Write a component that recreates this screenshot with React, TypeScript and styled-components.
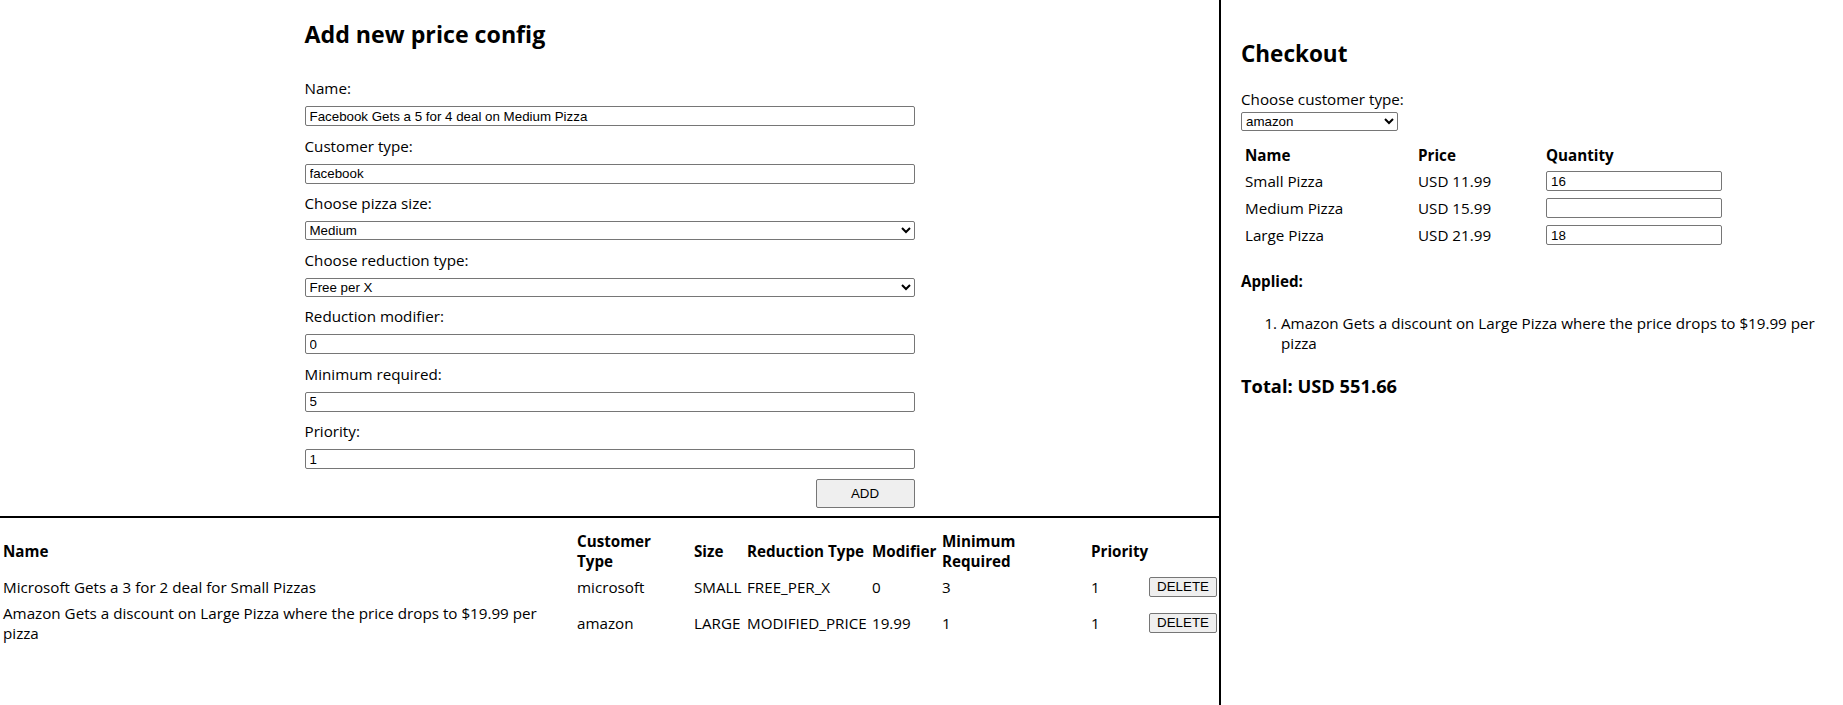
import React from "react";
import styled, { createGlobalStyle } from "styled-components";

const GlobalStyle = createGlobalStyle`
  html, body {
    margin: 0;
    padding: 0;
    background: #ffffff;
  }
  body {
    font-family: "Open Sans", "Noto Sans", sans-serif;
    font-size: 15.2px;
    color: #000000;
  }
`;

const Page = styled.div`
  display: flex;
  min-height: 100vh;
`;

const Main = styled.main`
  width: 1219px;
  flex: none;
  border-right: 2px solid #000;
  display: flex;
  flex-direction: column;
`;

const FormSection = styled.section`
  padding: 19px 0 8px;
  border-bottom: 2px solid #000;
`;

const Form = styled.form`
  width: 610px;
  margin: 0 auto;
  display: flex;
  flex-direction: column;
`;

const Title = styled.h2<{ $gap: number; $size: number }>`
  margin: 0 0 ${(p) => p.$gap}px;
  font-size: ${(p) => p.$size}px;
  font-weight: 700;
  line-height: 30px;
`;

const Field = styled.div`
  display: flex;
  flex-direction: column;
  margin-bottom: 9.5px;
`;

const Label = styled.label`
  display: block;
  line-height: 20px;
  margin-bottom: 8px;
`;

const TextInput = styled.input<{ $width?: number }>`
  display: block;
  box-sizing: border-box;
  width: ${(p) => (p.$width ? `${p.$width}px` : "100%")};
  height: 20px;
  margin: 0;
  padding: 0 4px;
  border: 1px solid #767676;
  border-radius: 2px;
  font-family: "Liberation Sans", Arial, sans-serif;
  font-size: 13.33px;
  color: #000;
  background: #fff;
`;

const Select = styled.select<{ $width?: number }>`
  box-sizing: border-box;
  width: ${(p) => (p.$width ? `${p.$width}px` : "100%")};
  height: 19px;
  margin: 0;
  font-family: "Liberation Sans", Arial, sans-serif;
  font-size: 13.33px;
  color: #000;
  border: 1px solid #767676;
  border-radius: 2px;
  background: #fff;
`;

const Actions = styled.div`
  display: flex;
  justify-content: flex-end;
`;

const Button = styled.button<{ $large?: boolean }>`
  display: block;
  box-sizing: border-box;
  width: ${(p) => (p.$large ? 99 : 68)}px;
  height: ${(p) => (p.$large ? 29 : 20)}px;
  margin: 0;
  padding: 0;
  font-family: "Liberation Sans", Arial, sans-serif;
  font-size: 13.33px;
  color: #000;
  background: #efefef;
  border: 1px solid #767676;
  border-radius: 2px;
`;

const ConfigTable = styled.table`
  width: 1218px;
  margin-top: 9px;
  table-layout: fixed;
  border-spacing: 2px;
  border-collapse: separate;
`;

const Col = styled.col<{ $w: number }>`
  width: ${(p) => p.$w}px;
`;

const Th = styled.th`
  text-align: left;
  vertical-align: middle;
  padding: 2px 1px;
  font-weight: 700;
  line-height: 20px;
`;

const Td = styled.td`
  text-align: left;
  vertical-align: middle;
  padding: 2px 1px;
  line-height: 20px;
`;

const Stack = styled.span`
  display: inline-block;
  width: min-content;
`;

const Aside = styled.aside`
  flex: 1;
  padding: 39px 21px 0 20px;
  display: flex;
  flex-direction: column;
  align-items: flex-start;
`;

const PlainLabel = styled.label`
  display: block;
  line-height: 20px;
  margin-bottom: 3px;
`;

const CartTable = styled.table`
  margin-top: 10px;
  table-layout: fixed;
  border-spacing: 3px;
  border-collapse: separate;
`;

const CartTh = styled.th`
  text-align: left;
  padding: 1px;
  font-weight: 700;
  line-height: 20px;
`;

const CartTd = styled.td`
  text-align: left;
  vertical-align: middle;
  padding: 2px 1px;
  line-height: 20px;
`;

const SubTitle = styled.h4`
  margin: 21px 0 0;
  font-size: 15.2px;
  font-weight: 700;
  line-height: 20px;
`;

const AppliedList = styled.ol`
  margin: 21.5px 0 0;
  padding-left: 40px;
  line-height: 20px;
`;

const Total = styled.h3`
  margin: 21px 0 0;
  font-size: 18.3px;
  font-weight: 700;
  line-height: 24px;
`;

type Config = {
  name: string;
  customer: string;
  size: string;
  reduction: string;
  modifier: string;
  minimum: string;
  priority: string;
};

const configs: Config[] = [
  {
    name: "Microsoft Gets a 3 for 2 deal for Small Pizzas",
    customer: "microsoft",
    size: "SMALL",
    reduction: "FREE_PER_X",
    modifier: "0",
    minimum: "3",
    priority: "1",
  },
  {
    name: "Amazon Gets a discount on Large Pizza where the price drops to $19.99 per pizza",
    customer: "amazon",
    size: "LARGE",
    reduction: "MODIFIED_PRICE",
    modifier: "19.99",
    minimum: "1",
    priority: "1",
  },
];

const pizzas = [
  { name: "Small Pizza", price: "USD 11.99", qty: "16" },
  { name: "Medium Pizza", price: "USD 15.99", qty: "" },
  { name: "Large Pizza", price: "USD 21.99", qty: "18" },
];

const colWidths = [572, 115, 51, 123, 68, 147, 56, 68];

export default function App() {
  return (
    <>
      <GlobalStyle />
      <Page>
        <Main>
          <FormSection>
            <Form onSubmit={(e) => e.preventDefault()}>
              <Title $gap={29} $size={23.2}>
                Add new price config
              </Title>
              <Field>
                <Label>Name:</Label>
                <TextInput type="text" defaultValue="Facebook Gets a 5 for 4 deal on Medium Pizza" />
              </Field>
              <Field>
                <Label>Customer type:</Label>
                <TextInput type="text" defaultValue="facebook" />
              </Field>
              <Field>
                <Label>Choose pizza size:</Label>
                <Select defaultValue="Medium">
                  <option value="Small">Small</option>
                  <option value="Medium">Medium</option>
                  <option value="Large">Large</option>
                </Select>
              </Field>
              <Field>
                <Label>Choose reduction type:</Label>
                <Select defaultValue="FREE_PER_X">
                  <option value="FREE_PER_X">Free per X</option>
                  <option value="MODIFIED_PRICE">Modified price</option>
                </Select>
              </Field>
              <Field>
                <Label>Reduction modifier:</Label>
                <TextInput type="text" defaultValue="0" />
              </Field>
              <Field>
                <Label>Minimum required:</Label>
                <TextInput type="text" defaultValue="5" />
              </Field>
              <Field>
                <Label>Priority:</Label>
                <TextInput type="text" defaultValue="1" />
              </Field>
              <Actions>
                <Button type="submit" $large>
                  ADD
                </Button>
              </Actions>
            </Form>
          </FormSection>

          <ConfigTable>
            <colgroup>
              {colWidths.map((w, i) => (
                <Col key={i} $w={w} />
              ))}
            </colgroup>
            <thead>
              <tr>
                <Th>Name</Th>
                <Th>
                  <Stack>Customer Type</Stack>
                </Th>
                <Th>Size</Th>
                <Th>Reduction Type</Th>
                <Th>Modifier</Th>
                <Th>
                  <Stack>Minimum Required</Stack>
                </Th>
                <Th>Priority</Th>
                <Th></Th>
              </tr>
            </thead>
            <tbody>
              {configs.map((c) => (
                <tr key={c.name}>
                  <Td>{c.name}</Td>
                  <Td>{c.customer}</Td>
                  <Td>{c.size}</Td>
                  <Td>{c.reduction}</Td>
                  <Td>{c.modifier}</Td>
                  <Td>{c.minimum}</Td>
                  <Td>{c.priority}</Td>
                  <Td>
                    <Button type="button">DELETE</Button>
                  </Td>
                </tr>
              ))}
            </tbody>
          </ConfigTable>
        </Main>

        <Aside>
          <Title $gap={20} $size={22.5}>
            Checkout
          </Title>
          <PlainLabel>Choose customer type:</PlainLabel>
          <Select $width={157} defaultValue="amazon">
            <option value="microsoft">microsoft</option>
            <option value="amazon">amazon</option>
            <option value="facebook">facebook</option>
          </Select>
          <CartTable>
            <colgroup>
              <Col $w={170} />
              <Col $w={125} />
              <Col $w={178} />
            </colgroup>
            <thead>
              <tr>
                <CartTh>Name</CartTh>
                <CartTh>Price</CartTh>
                <CartTh>Quantity</CartTh>
              </tr>
            </thead>
            <tbody>
              {pizzas.map((p) => (
                <tr key={p.name}>
                  <CartTd>{p.name}</CartTd>
                  <CartTd>{p.price}</CartTd>
                  <CartTd>
                    <TextInput type="text" $width={176} defaultValue={p.qty} />
                  </CartTd>
                </tr>
              ))}
            </tbody>
          </CartTable>
          <SubTitle>Applied:</SubTitle>
          <AppliedList>
            <li>Amazon Gets a discount on Large Pizza where the price drops to $19.99 per pizza</li>
          </AppliedList>
          <Total>Total: USD 551.66</Total>
        </Aside>
      </Page>
    </>
  );
}
